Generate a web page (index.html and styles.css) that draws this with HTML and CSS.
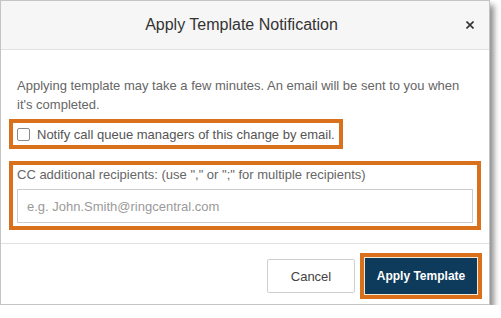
FILE: index.html
```html
<!DOCTYPE html>
<html lang="en">
<head>
    <meta charset="UTF-8">
    <title>Apply Template Notification</title>
    <link rel="stylesheet" href="styles.css">
</head>
<body>

    <div class="dialog">
        <div class="dialog-header">
            <div class="dialog-title">Apply Template Notification</div>
            <button class="close-btn" aria-label="Close">
                <svg width="8" height="8" viewBox="0 0 8 8">
                    <path d="M0.5 0.5 L7.5 7.5 M7.5 0.5 L0.5 7.5" stroke="#333" stroke-width="1.6" fill="none"/>
                </svg>
            </button>
        </div>

        <div class="dialog-body">
            <p class="intro">Applying template may take a few minutes. An email will be sent to you when it's completed.</p>

            <div class="highlight highlight-inline">
                <label class="check-row">
                    <span class="checkbox"></span>
                    Notify call queue managers of this change by email.
                </label>
            </div>

            <div class="highlight highlight-block">
                <label class="field-label" for="ccRecipients">CC additional recipients: (use "," or ";" for multiple recipients)</label>
                <input type="text" id="ccRecipients" class="text-input" placeholder="e.g. John.Smith@ringcentral.com">
            </div>
        </div>

        <div class="dialog-footer">
            <button class="btn btn-cancel">Cancel</button>
            <div class="highlight highlight-btn">
                <button class="btn btn-primary">Apply Template</button>
            </div>
        </div>
    </div>

</body>
</html>
```

FILE: styles.css
```css
body {
    margin: 0;
    font-family: "Liberation Sans", Arial, sans-serif;
    background-color: #fff;
}

.dialog {
    width: 488px;
    border: 1px solid #c4c4c4;
    background-color: #fff;
    box-shadow: 4px 5px 6px rgba(0, 0, 0, 0.45);
}

.dialog-header {
    display: flex;
    align-items: center;
    height: 48px;
    padding: 0 15px 0 16px;
    background-color: #f6f6f6;
    border-bottom: 1px solid #e2e2e2;
}
.dialog-title {
    flex: 1;
    text-align: center;
    font-size: 16px;
    color: #333;
}
.close-btn {
    display: flex;
    width: 8px;
    height: 8px;
    padding: 0;
    border: none;
    background: none;
}

.dialog-body {
    padding: 26px 16px 13px;
}
.intro {
    margin: 0 0 5px;
    font-size: 13px;
    line-height: 19px;
    color: #666;
}

.highlight {
    border: 4px solid #d9711c;
    box-sizing: border-box;
}
.highlight-inline {
    display: flex;
    width: fit-content;
    margin-left: -8px;
    padding: 4px 4px 3px;
}
.highlight-block {
    margin: 12px -8px 0;
    padding: 1px 4px 3px;
}
.highlight-btn {
    display: flex;
    margin-left: 5px;
}

.check-row {
    display: flex;
    align-items: center;
    gap: 7px;
    font-size: 13px;
    line-height: 15px;
    color: #555;
}
.checkbox {
    width: 11px;
    height: 11px;
    border: 1px solid #8a8a8a;
    border-radius: 2px;
}

.field-label {
    display: block;
    font-size: 13px;
    line-height: 17px;
    color: #666;
    margin-bottom: 6px;
}
.text-input {
    display: block;
    width: 100%;
    height: 34px;
    box-sizing: border-box;
    border: 1px solid #ccc;
    padding: 0 9px;
    font-family: "Liberation Sans", Arial, sans-serif;
    font-size: 13px;
    color: #333;
}
.text-input::placeholder {
    color: #9a9a9a;
}

.dialog-footer {
    display: flex;
    justify-content: flex-end;
    align-items: center;
    padding: 9px 7px 5px;
    border-top: 1px solid #e2e2e2;
}
.btn {
    font-family: "Liberation Sans", Arial, sans-serif;
    font-size: 13px;
    cursor: pointer;
}
.btn-cancel {
    width: 88px;
    height: 34px;
    border: 1px solid #cfcfcf;
    border-radius: 2px;
    background-color: #fff;
    color: #444;
}
.btn-primary {
    width: 114px;
    height: 38px;
    border: 1px solid #efe9d8;
    background-color: #0e3a5c;
    color: #fff;
    font-size: 12px;
    font-weight: bold;
}
```
